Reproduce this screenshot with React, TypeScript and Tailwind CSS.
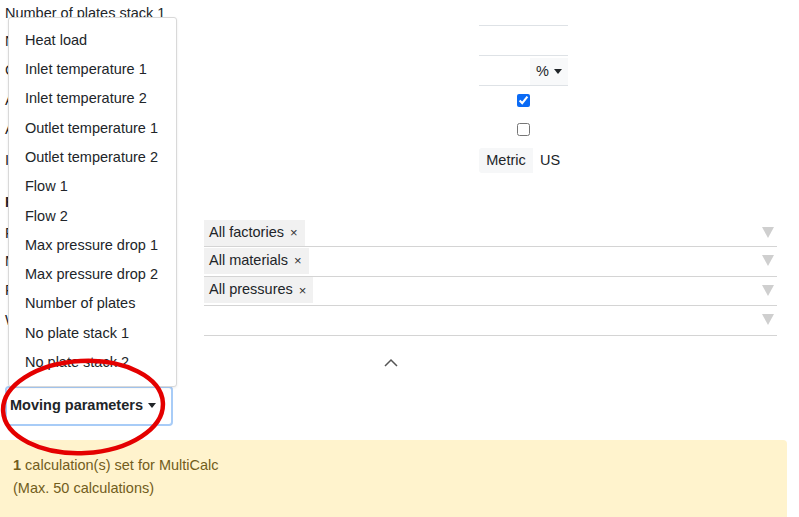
import React from "react";

const moving = [
  "Heat load",
  "Inlet temperature 1",
  "Inlet temperature 2",
  "Outlet temperature 1",
  "Outlet temperature 2",
  "Flow 1",
  "Flow 2",
  "Max pressure drop 1",
  "Max pressure drop 2",
  "Number of plates",
  "No plate stack 1",
  "No plate stack 2",
];

const filters = [
  { label: "Factories", tag: "All factories" },
  { label: "Materials", tag: "All materials" },
  { label: "Pressures", tag: "All pressures" },
  { label: "Wall thickness", tag: "" },
];

function Caret() {
  return (
    <svg width="8" height="5" viewBox="0 0 8 5" className="ml-[5px]" aria-hidden>
      <path d="M0 0h8L4 5z" fill="currentColor" />
    </svg>
  );
}

function MultiSelect({ tag }: { tag: string }) {
  return (
    <div className="flex h-full flex-1 items-center justify-between border-b border-[#d4d4d4] pb-px">
      {tag ? (
        <span className="flex h-[26px] items-center bg-[#f1f1f1] pl-[5px] pr-[7px]">
          {tag}
          <span className="ml-[6px] text-[13px] text-[#333]">×</span>
        </span>
      ) : (
        <span />
      )}
      <svg width="12" height="11" viewBox="0 0 12 11" className="mr-[3px]" aria-hidden>
        <path d="M0 0h12L6 11z" fill="#cfcfcf" />
      </svg>
    </div>
  );
}

export default function App() {
  return (
    <div className="relative h-[517px] overflow-hidden bg-white font-['Liberation_Sans',Arial,sans-serif] text-[14.5px] text-[#212529]">
      <div className="pl-[5px]">
        <div className="flex h-[27px] items-center">
          <div className="w-[474px]">Number of plates stack 1</div>
          <div className="h-[26px] w-[89px] self-start border-b border-[#dee2e6]" />
        </div>
        <div className="flex h-[29px] items-center">
          <div className="w-[474px]">Number of plates stack 2</div>
          <div className="h-[29px] w-[89px] border-b border-[#dee2e6]" />
        </div>
        <div className="flex h-[30px] items-center">
          <div className="w-[474px]">Capacity margin</div>
          <div className="flex h-[30px] w-[89px] border-b border-[#dee2e6] pt-[2px]">
            <div className="flex-1" />
            <div className="flex w-[38px] items-center justify-center bg-[#f8f9fa] text-[#212529]">
              %
              <Caret />
            </div>
          </div>
        </div>
        <div className="flex h-[29px] items-center">
          <div className="w-[474px]">Allow double wall</div>
          <div className="flex w-[89px] justify-center">
            <input type="checkbox" defaultChecked className="h-[13px] w-[13px] accent-[#0b6bf5]" />
          </div>
        </div>
        <div className="flex h-[29px] items-center">
          <div className="w-[474px]">Allow asymmetric</div>
          <div className="flex w-[89px] justify-center">
            <input type="checkbox" className="h-[13px] w-[13px]" />
          </div>
        </div>
        <div className="flex h-[33px] items-center">
          <div className="w-[474px]">Input units</div>
          <div className="flex h-[25px] w-[89px]">
            <span className="flex w-[54px] items-center justify-center rounded-l-[3px] bg-[#f6f7f8]">Metric</span>
            <span className="flex w-[34px] items-center justify-center rounded-r-[3px] bg-white">US</span>
          </div>
        </div>
        <div className="flex h-[43px] items-end pb-[6px] font-bold">Filters</div>
        {filters.map((f, i) => (
          <div key={f.label} className={"flex items-center pr-[22px] " + (i === 0 ? "h-[27px]" : "h-[29.5px]")}>
            <div className="w-[199px]">{f.label}</div>
            <MultiSelect tag={f.tag} />
          </div>
        ))}
        <div className="flex h-[50px] items-center pl-[379px]">
          <svg width="14" height="9" viewBox="0 0 14 9" className="mt-[4px]" aria-hidden>
            <path d="M1 8l6-6 6 6" fill="none" stroke="#555" strokeWidth="1.5" />
          </svg>
        </div>
        <div className="flex h-[40px] w-[168px] items-center rounded-[4px] border-2 border-[#a8ccf7] pl-[3px] font-bold">
          Moving parameters
          <Caret />
        </div>
      </div>

      <div className="mt-[14px] h-[90px] w-[787px] rounded-tr-[4px] bg-[#fff3cd] px-[13px] pt-[14px] leading-[23px] text-[#725d1c]">
        <div>
          <span className="font-bold">1</span> calculation(s) set for MultiCalc
        </div>
        <div>(Max. 50 calculations)</div>
      </div>

      <ul className="absolute left-[8px] top-[17px] w-[169px] rounded-[3px] border border-[#d9d9d9] bg-white py-[8px] shadow-[0_1px_3px_rgba(0,0,0,0.08)]">
        {moving.map((m) => (
          <li key={m} className="flex h-[29.3px] items-center pl-[16px]">
            {m}
          </li>
        ))}
      </ul>

      <svg className="pointer-events-none absolute left-0 top-[355px]" width="180" height="105" viewBox="0 0 180 105" aria-hidden>
        <ellipse cx="83" cy="52" rx="80" ry="46" fill="none" stroke="#e40000" strokeWidth="4.5" transform="rotate(-3 83 52)" />
      </svg>
    </div>
  );
}
